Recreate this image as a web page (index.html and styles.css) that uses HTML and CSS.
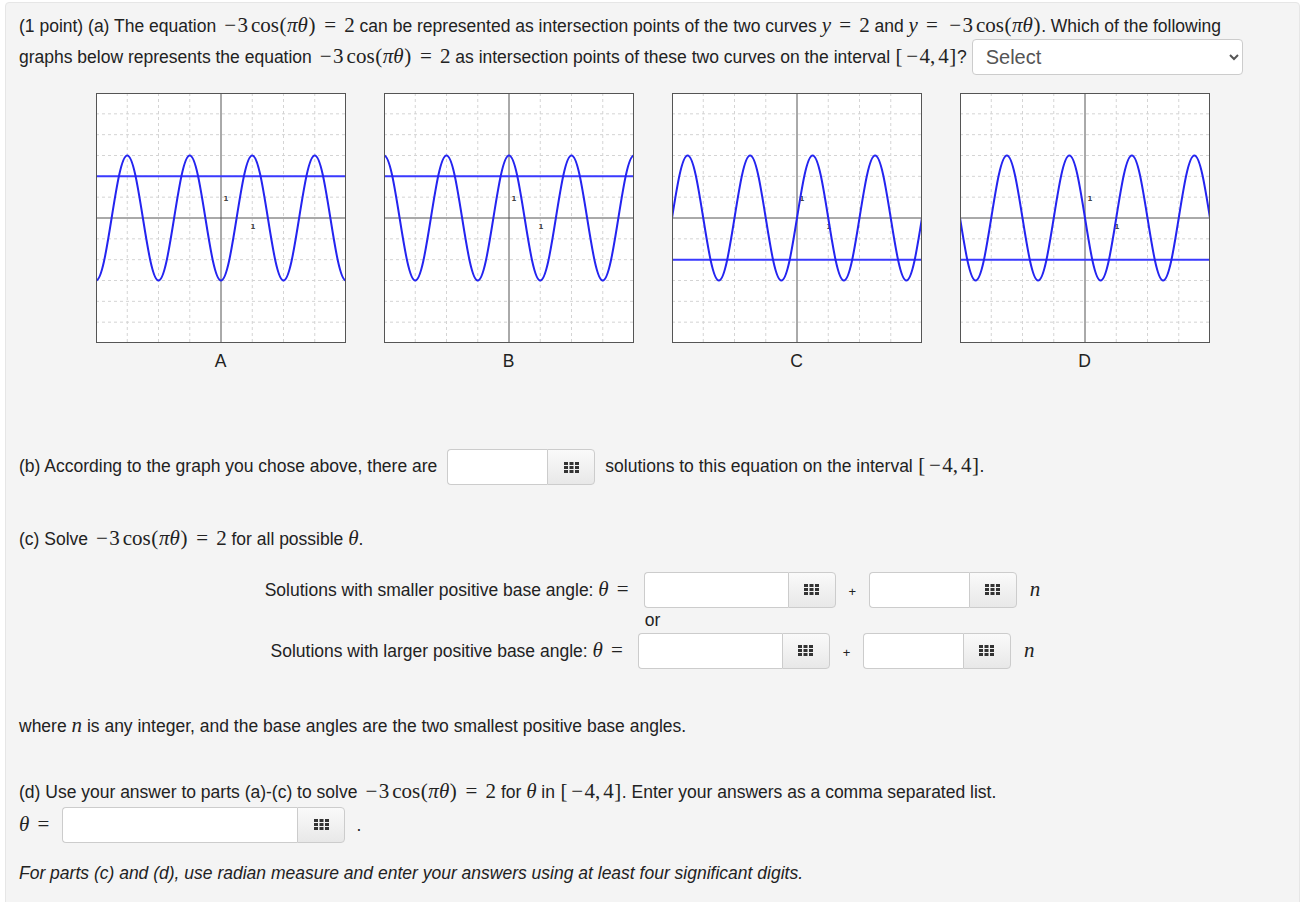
FILE: index.html
```html
<!DOCTYPE html>
<html lang="en">
<head>
  <meta charset="UTF-8">
  <title>Problem 1</title>
  <link rel="stylesheet" href="styles.css">
</head>
<body>

  <svg class="defs" width="0" height="0">
    <defs>
      <symbol id="plane" viewBox="0 0 250 250">
        <rect x="0" y="0" width="250" height="250" fill="#fff"/>
        <path class="grid" d="M31.25 0V250M62.5 0V250M93.75 0V250M156.25 0V250M187.5 0V250M218.75 0V250M0 20.83H250M0 41.67H250M0 62.5H250M0 83.33H250M0 104.17H250M0 145.83H250M0 166.67H250M0 187.5H250M0 208.33H250M0 229.17H250"/>
        <path class="axis" d="M125 0V250M0 125H250"/>
        <text class="tick" x="127.5" y="108">1</text>
        <text class="tick" x="154.5" y="136">1</text>
      </symbol>
      <symbol id="icon-keys" viewBox="0 0 15 11">
        <rect x="0" y="0" width="4" height="3"/><rect x="5.5" y="0" width="4" height="3"/><rect x="11" y="0" width="4" height="3"/>
        <rect x="0" y="4" width="4" height="3"/><rect x="5.5" y="4" width="4" height="3"/><rect x="11" y="4" width="4" height="3"/>
        <rect x="0" y="8" width="4" height="3"/><rect x="5.5" y="8" width="4" height="3"/><rect x="11" y="8" width="4" height="3"/>
      </symbol>
    </defs>
  </svg>

  <div class="problema">

    <div class="linea">(1 point) (a) The equation <span class="m"><span class="op">&minus;</span>3<span class="fn">cos</span><span class="p">(</span><i>π</i><i>θ</i><span class="p">)</span><span class="rel">=</span>2</span> can be represented as intersection points of the two curves <span class="m"><i>y</i><span class="rel">=</span>2</span> and <span class="m"><i>y</i><span class="rel">=</span><span class="op">&minus;</span>3<span class="fn">cos</span><span class="p">(</span><i>π</i><i>θ</i><span class="p">)</span></span>. Which of the following</div>
    <div class="fila fila-select">graphs below represents the equation <span class="m"><span class="op">&minus;</span>3<span class="fn">cos</span><span class="p">(</span><i>π</i><i>θ</i><span class="p">)</span><span class="rel">=</span>2</span> as intersection points of these two curves on the interval <span class="m"><span class="p">[</span><span class="op">&minus;</span>4,<span class="coma"></span>4<span class="p">]</span></span>?<select class="selector">
        <option>Select</option>
        <option>A</option>
        <option>B</option>
        <option>C</option>
        <option>D</option>
      </select></div>

    <div class="graficas">
      <div class="grafica">
        <svg class="plano" viewBox="0 0 250 250" width="250" height="250">
          <use href="#plane"/>
          <path class="recta" d="M0 83.33H250"/>
          <path class="curva" d="M-46.875,125c5.1,-32 9.97,-62.5 15.625,-62.5s10.525,30.5 15.625,62.5s9.97,62.5 15.625,62.5s10.525,-30.5 15.625,-62.5c5.1,-32 9.97,-62.5 15.625,-62.5s10.525,30.5 15.625,62.5s9.97,62.5 15.625,62.5s10.525,-30.5 15.625,-62.5c5.1,-32 9.97,-62.5 15.625,-62.5s10.525,30.5 15.625,62.5s9.97,62.5 15.625,62.5s10.525,-30.5 15.625,-62.5c5.1,-32 9.97,-62.5 15.625,-62.5s10.525,30.5 15.625,62.5s9.97,62.5 15.625,62.5s10.525,-30.5 15.625,-62.5c5.1,-32 9.97,-62.5 15.625,-62.5s10.525,30.5 15.625,62.5s9.97,62.5 15.625,62.5s10.525,-30.5 15.625,-62.5"/>
          <rect class="marco" x="0.5" y="0.5" width="249" height="249"/>
        </svg>
        <div class="letra">A</div>
      </div>
      <div class="grafica">
        <svg class="plano" viewBox="0 0 250 250" width="250" height="250">
          <use href="#plane"/>
          <path class="recta" d="M0 83.33H250"/>
          <path class="curva" d="M-15.625,125c5.1,-32 9.97,-62.5 15.625,-62.5s10.525,30.5 15.625,62.5s9.97,62.5 15.625,62.5s10.525,-30.5 15.625,-62.5c5.1,-32 9.97,-62.5 15.625,-62.5s10.525,30.5 15.625,62.5s9.97,62.5 15.625,62.5s10.525,-30.5 15.625,-62.5c5.1,-32 9.97,-62.5 15.625,-62.5s10.525,30.5 15.625,62.5s9.97,62.5 15.625,62.5s10.525,-30.5 15.625,-62.5c5.1,-32 9.97,-62.5 15.625,-62.5s10.525,30.5 15.625,62.5s9.97,62.5 15.625,62.5s10.525,-30.5 15.625,-62.5c5.1,-32 9.97,-62.5 15.625,-62.5s10.525,30.5 15.625,62.5s9.97,62.5 15.625,62.5s10.525,-30.5 15.625,-62.5"/>
          <rect class="marco" x="0.5" y="0.5" width="249" height="249"/>
        </svg>
        <div class="letra">B</div>
      </div>
      <div class="grafica">
        <svg class="plano" viewBox="0 0 250 250" width="250" height="250">
          <use href="#plane"/>
          <path class="recta" d="M0 166.67H250"/>
          <path class="curva" d="M0,125c5.1,-32 9.97,-62.5 15.625,-62.5s10.525,30.5 15.625,62.5s9.97,62.5 15.625,62.5s10.525,-30.5 15.625,-62.5c5.1,-32 9.97,-62.5 15.625,-62.5s10.525,30.5 15.625,62.5s9.97,62.5 15.625,62.5s10.525,-30.5 15.625,-62.5c5.1,-32 9.97,-62.5 15.625,-62.5s10.525,30.5 15.625,62.5s9.97,62.5 15.625,62.5s10.525,-30.5 15.625,-62.5c5.1,-32 9.97,-62.5 15.625,-62.5s10.525,30.5 15.625,62.5s9.97,62.5 15.625,62.5s10.525,-30.5 15.625,-62.5"/>
          <rect class="marco" x="0.5" y="0.5" width="249" height="249"/>
        </svg>
        <div class="letra">C</div>
      </div>
      <div class="grafica">
        <svg class="plano" viewBox="0 0 250 250" width="250" height="250">
          <use href="#plane"/>
          <path class="recta" d="M0 166.67H250"/>
          <path class="curva" d="M-31.25,125c5.1,-32 9.97,-62.5 15.625,-62.5s10.525,30.5 15.625,62.5s9.97,62.5 15.625,62.5s10.525,-30.5 15.625,-62.5c5.1,-32 9.97,-62.5 15.625,-62.5s10.525,30.5 15.625,62.5s9.97,62.5 15.625,62.5s10.525,-30.5 15.625,-62.5c5.1,-32 9.97,-62.5 15.625,-62.5s10.525,30.5 15.625,62.5s9.97,62.5 15.625,62.5s10.525,-30.5 15.625,-62.5c5.1,-32 9.97,-62.5 15.625,-62.5s10.525,30.5 15.625,62.5s9.97,62.5 15.625,62.5s10.525,-30.5 15.625,-62.5c5.1,-32 9.97,-62.5 15.625,-62.5s10.525,30.5 15.625,62.5s9.97,62.5 15.625,62.5s10.525,-30.5 15.625,-62.5"/>
          <rect class="marco" x="0.5" y="0.5" width="249" height="249"/>
        </svg>
        <div class="letra">D</div>
      </div>
    </div>

    <div class="fila parte-b">(b) According to the graph you chose above, there are<span class="campo c-b"><input type="text" class="ancho-100"><button class="teclado"><svg width="15" height="11"><use href="#icon-keys"/></svg></button></span>solutions to this equation on the interval <span class="m"><span class="p">[</span><span class="op">&minus;</span>4,<span class="coma"></span>4<span class="p">]</span></span>.</div>

    <div class="linea parte-c">(c) Solve <span class="m"><span class="op">&minus;</span>3<span class="fn">cos</span><span class="p">(</span><i>π</i><i>θ</i><span class="p">)</span><span class="rel">=</span>2</span> for all possible <span class="m"><i>θ</i></span>.</div>

    <div class="soluciones">
      <div class="fila">Solutions with smaller positive base angle: <span class="m"><i>θ</i><span class="rel">=</span></span><span class="campo c-sol"><input type="text" class="ancho-144"><button class="teclado"><svg width="15" height="11"><use href="#icon-keys"/></svg></button></span><span class="mas">+</span><span class="campo"><input type="text" class="ancho-100"><button class="teclado"><svg width="15" height="11"><use href="#icon-keys"/></svg></button></span><span class="m ene"><i>n</i></span></div>
      <div class="linea o">or</div>
      <div class="fila fila-sol2">Solutions with larger positive base angle: <span class="m"><i>θ</i><span class="rel">=</span></span><span class="campo c-sol"><input type="text" class="ancho-144"><button class="teclado"><svg width="15" height="11"><use href="#icon-keys"/></svg></button></span><span class="mas">+</span><span class="campo"><input type="text" class="ancho-100"><button class="teclado"><svg width="15" height="11"><use href="#icon-keys"/></svg></button></span><span class="m ene"><i>n</i></span></div>
    </div>

    <div class="linea donde">where <span class="m"><i>n</i></span> is any integer, and the base angles are the two smallest positive base angles.</div>

    <div class="linea parte-d">(d) Use your answer to parts (a)-(c) to solve <span class="m"><span class="op">&minus;</span>3<span class="fn">cos</span><span class="p">(</span><i>π</i><i>θ</i><span class="p">)</span><span class="rel">=</span>2</span> for <span class="m"><i>θ</i></span> in <span class="m"><span class="p">[</span><span class="op">&minus;</span>4,<span class="coma"></span>4<span class="p">]</span></span>. Enter your answers as a comma separated list.</div>
    <div class="fila fila-d"><span class="m"><i>θ</i><span class="rel">=</span></span><span class="campo c-d"><input type="text" class="ancho-235"><button class="teclado"><svg width="15" height="11"><use href="#icon-keys"/></svg></button></span><span class="punto">.</span></div>

    <div class="linea nota"><em>For parts (c) and (d), use radian measure and enter your answers using at least four significant digits.</em></div>

  </div>

</body>
</html>
```

FILE: styles.css
```css
body {
  margin: 0;
  background-color: #fff;
  font-family: "Liberation Sans", Arial, sans-serif;
  font-size: 17.5px;
  color: #222;
}
.defs {
  position: absolute;
}
.problema {
  background-color: #f4f4f4;
  border: 1px solid #e6e6e6;
  border-radius: 4px;
  margin: 2px 7px 0 5px;
  padding: 13px 13px 30px 13px;
  min-height: 900px;
}
.linea {
  line-height: 20px;
}
.fila {
  line-height: 36px;
  height: 36px;
  white-space: nowrap;
}
.fila-select {
  margin-top: 3px;
}
.selector {
  vertical-align: middle;
  margin: -2px 0 0 5px;
  width: 271px;
  height: 36px;
  border: 1px solid #ccc;
  border-radius: 4px;
  background-color: #fff;
  color: #555;
  font-family: "Liberation Sans", Arial, sans-serif;
  font-size: 20px;
  padding-left: 9px;
}

/* math */
.m {
  font-family: "Liberation Serif", "Times New Roman", serif;
  font-size: 21px;
  line-height: 14px;
  white-space: nowrap;
}
.m i {
  font-style: italic;
}
.op {
  display: inline-block;
  width: 0.7em;
  margin-left: 0.08em;
  text-align: center;
}
.p {
  display: inline-block;
  width: 0.39em;
  text-align: center;
}
.fn {
  margin-left: 3px;
}
.rel {
  display: inline-block;
  width: 0.78em;
  text-align: center;
  margin: 0 0.28em;
}
.coma {
  display: inline-block;
  width: 3px;
}

/* graphs */
.graficas {
  display: flex;
  justify-content: center;
  margin-top: 18px;
}
.grafica {
  width: 288px;
  text-align: center;
}
.plano {
  display: block;
  margin: 0 auto;
}
.grid {
  stroke: #d4d4d4;
  stroke-width: 1;
  stroke-dasharray: 3 3;
  fill: none;
}
.axis {
  stroke: #555;
  stroke-width: 1;
  fill: none;
}
.tick {
  font-family: "DejaVu Sans", sans-serif;
  font-size: 7px;
  font-weight: bold;
  fill: #444;
}
.recta {
  stroke: #3a3aff;
  stroke-width: 2;
  fill: none;
}
.curva {
  stroke: #2424f0;
  stroke-width: 2;
  fill: none;
}
.marco {
  stroke: #555;
  stroke-width: 1;
  fill: none;
}
.letra {
  margin-top: 8px;
  line-height: 20px;
}

/* answer fields */
.campo {
  display: inline-flex;
  vertical-align: middle;
  height: 36px;
  margin-top: -3px;
}
.campo input {
  box-sizing: border-box;
  height: 36px;
  border: 1px solid #ccc;
  border-right: none;
  border-radius: 4px 0 0 4px;
  background-color: #fff;
  padding: 0 8px;
  font-size: 16px;
}
.ancho-100 { width: 100px; }
.ancho-144 { width: 144px; }
.ancho-235 { width: 235px; }
.teclado {
  box-sizing: border-box;
  width: 48px;
  height: 36px;
  border: 1px solid #ccc;
  border-radius: 0 4px 4px 0;
  background: linear-gradient(#fafafa, #e8e8e8);
  display: flex;
  align-items: center;
  justify-content: center;
  padding: 0;
}
.teclado svg {
  fill: #333;
}
.c-b {
  margin: 0 10px;
}
.c-sol {
  margin-left: 7px;
}
.c-d {
  margin-left: 5px;
}

.parte-b {
  margin-top: 77px;
}
.parte-c {
  margin-top: 45px;
}
.soluciones {
  display: flex;
  flex-direction: column;
  align-items: center;
  margin-top: 23px;
}
.mas {
  display: inline-block;
  font-size: 13px;
  width: 33px;
  text-align: center;
}
.ene {
  margin-left: 13px;
}
.o {
  margin-top: 2px;
}
.fila-sol2 {
  margin-top: 3px;
}
.donde {
  margin-top: 47px;
}
.parte-d {
  margin-top: 46px;
}
.fila-d {
  margin-top: 5px;
}
.punto {
  margin-left: 11px;
}
.nota {
  margin-top: 20px;
}
```
